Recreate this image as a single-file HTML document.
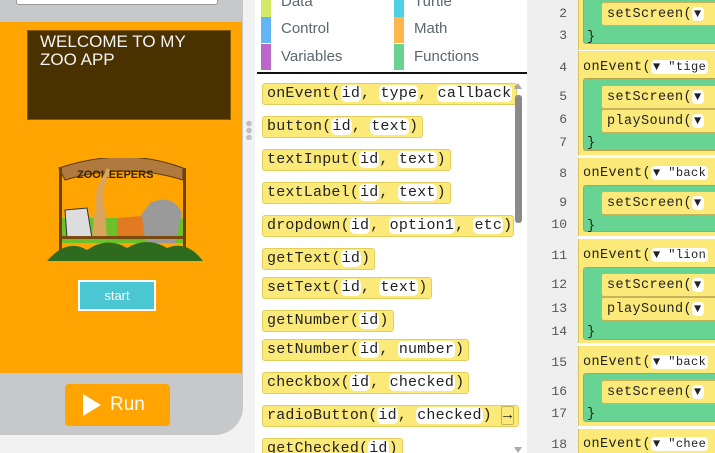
<!DOCTYPE html><html><head><style>
*{margin:0;padding:0;box-sizing:border-box}
html,body{width:715px;height:453px;overflow:hidden}
body{background:#f2f2f2;position:relative;font-family:"Liberation Sans",sans-serif}
.a{position:absolute}
.tb{position:absolute;left:262px;height:22px;background:#fbe97a;border:1px solid #e3cf5c;border-radius:3px;font-family:"Liberation Mono","Courier New",monospace;font-size:15px;letter-spacing:0.2px;line-height:20px;padding:0 4px;color:#222;white-space:nowrap}
.tb i{font-style:normal;background:#fff;border-radius:5px;padding:0 1px}
.cat{position:absolute;font-size:15px;color:#5b6770}
.bar{position:absolute;width:10px;height:26px}
.ln{position:absolute;left:527px;width:40px;text-align:right;font-family:"Liberation Mono",monospace;font-size:13px;color:#555}
.y{position:absolute;left:578px;right:0;background:#fbe97a;border-left:1px solid #d9c45a}
.g{position:absolute;left:583px;right:0;background:#67d494;border:1px solid #b7a24a;border-right:none;border-radius:3px 0 0 3px}
.s{position:absolute;left:601px;right:0;height:24px;background:#fbe97a;border:1px solid #c8b458;border-right:none;border-radius:3px 0 0 3px;font-family:"Liberation Mono",monospace;font-size:13.5px;letter-spacing:0.4px;line-height:22px;padding-left:5px;color:#222;white-space:nowrap}
.h{position:absolute;left:583px;font-family:"Liberation Mono",monospace;font-size:13.5px;letter-spacing:0.4px;color:#222;white-space:nowrap}
.h b,.s b{font-weight:normal;background:#fff;border-radius:4px;padding:0 2px;font-size:12px}
</style></head><body>
<div class="a" style="left:0;top:0;width:243px;height:435px;background:#c6c8ca;border-radius:0 0 28px 0"></div>
<div class="a" style="left:16px;top:-4px;width:202px;height:9px;background:#fff;border:1px solid #999;border-radius:3px"></div>
<div class="a" style="left:0;top:22px;width:242px;height:351px;background:#ffa400"></div>
<div class="a" style="left:27px;top:30px;width:204px;height:90px;background:#4a3100;border:1px solid #8a5a00;color:#f3f3f3;font-size:17px;line-height:18px;padding:2px 12px">WELCOME TO MY ZOO APP</div>
<svg class="a" style="left:47px;top:158px" width="156" height="110" viewBox="0 0 156 110">
<path d="M12 10 Q78 -12 136 10 L136 22 Q78 4 18 22Z" fill="#b07a3e" stroke="#5a3a10"/>
<text x="30" y="20" font-family="Liberation Sans" font-weight="bold" font-size="11" fill="#3a2205">ZOOKEEPERS</text>
<rect x="12" y="10" width="3" height="90" fill="#6b4210"/><rect x="136" y="10" width="3" height="90" fill="#6b4210"/>
<rect x="15" y="60" width="121" height="25" fill="#6cc12a"/>
<path d="M45 80 L50 30 L60 10 L63 12 L56 32 L60 80Z" fill="#d9a45c"/>
<path d="M18 52 L40 50 L45 80 L20 80Z" fill="#ddd" stroke="#333"/>
<path d="M103 45 Q125 35 135 55 L128 85 L100 85 L92 60Z" fill="#9a9a9a"/>
<path d="M70 60 L95 58 L98 82 L70 82Z" fill="#e07b22"/>
<rect x="15" y="78" width="121" height="3" fill="#7a4a10"/>
<path d="M0 103 Q20 80 40 92 Q60 78 80 90 Q100 78 120 90 Q140 82 156 103 Z" fill="#2e6b1e"/>
</svg>
<div class="a" style="left:78px;top:280px;width:78px;height:31px;background:#4bc6d3;border:2px solid #fff;color:#fff;font-size:13px;text-align:center;line-height:27px">start</div>
<div class="a" style="left:65px;top:384px;width:105px;height:42px;background:#ffa400;border-radius:4px;color:#fff;font-size:19px;line-height:42px;padding-left:45px">Run</div>
<svg class="a" style="left:82px;top:393px" width="20" height="24"><path d="M1 1 L19 12 L1 23Z" fill="#fff"/></svg>
<div class="a" style="left:246px;top:120px;width:6px;height:20px;background:radial-gradient(circle,#c0c0c0 2.5px,transparent 3px) 0 0/6px 7px"></div>
<div class="a" style="left:255px;top:0;width:272px;height:453px;background:#fff"></div>
<div class="bar" style="left:261px;top:-8px;background:#d3e965"></div><div class="cat" style="left:281px;top:-7px">Data</div>
<div class="bar" style="left:394px;top:-8px;background:#4dd0e1"></div><div class="cat" style="left:414px;top:-7px">Turtle</div>
<div class="bar" style="left:261px;top:17px;background:#64b5f6"></div><div class="cat" style="left:281px;top:20px">Control</div>
<div class="bar" style="left:394px;top:17px;background:#ffb74d"></div><div class="cat" style="left:414px;top:20px">Math</div>
<div class="bar" style="left:261px;top:44px;background:#ba68c8"></div><div class="cat" style="left:281px;top:48px">Variables</div>
<div class="bar" style="left:394px;top:44px;background:#68d391"></div><div class="cat" style="left:414px;top:48px">Functions</div>
<div class="a" style="left:257px;top:72px;width:270px;height:2px;background:#111"></div>
<div class="tb" style="top:83px;width:255px;overflow:hidden">onEvent(<i>id</i>, <i>type</i>, <i>callback</i>)</div>
<div class="tb" style="top:116px">button(<i>id</i>, <i>text</i>)</div>
<div class="tb" style="top:149px">textInput(<i>id</i>, <i>text</i>)</div>
<div class="tb" style="top:182px">textLabel(<i>id</i>, <i>text</i>)</div>
<div class="tb" style="top:215px;width:252px;overflow:hidden">dropdown(<i>id</i>, <i>option1</i>, <i>etc</i>)</div>
<div class="tb" style="top:248px">getText(<i>id</i>)</div>
<div class="tb" style="top:277px">setText(<i>id</i>, <i>text</i>)</div>
<div class="tb" style="top:310px">getNumber(<i>id</i>)</div>
<div class="tb" style="top:339px">setNumber(<i>id</i>, <i>number</i>)</div>
<div class="tb" style="top:372px">checkbox(<i>id</i>, <i>checked</i>)</div>
<div class="tb" style="top:405px">radioButton(<i>id</i>, <i>checked</i>) <i style="background:#fbe97a;border:1px solid #c8b458;border-radius:2px">→</i></div>
<div class="tb" style="top:438px">getChecked(<i>id</i>)</div>
<div class="a" style="left:515px;top:95px;width:7px;height:128px;background:#8a8a8a;border-radius:3px"></div>
<svg class="a" style="left:513px;top:82px" width="10" height="8"><path d="M1 7 L5 1 L9 7Z" fill="#aaa"/></svg>
<svg class="a" style="left:513px;top:446px" width="10" height="8"><path d="M1 1 L5 7 L9 1Z" fill="#aaa"/></svg>
<div class="a" style="left:527px;top:0;width:51px;height:453px;background:#efefef"></div>
<div class="a" style="left:578px;top:0;width:137px;height:453px;background:#fff"></div>
<div class="ln" style="top:6px">2</div><div class="ln" style="top:28px">3</div><div class="ln" style="top:60px">4</div>
<div class="ln" style="top:89px">5</div><div class="ln" style="top:112px">6</div><div class="ln" style="top:135px">7</div>
<div class="ln" style="top:166px">8</div><div class="ln" style="top:195px">9</div><div class="ln" style="top:217px">10</div>
<div class="ln" style="top:248px">11</div><div class="ln" style="top:277px">12</div><div class="ln" style="top:301px">13</div>
<div class="ln" style="top:324px">14</div><div class="ln" style="top:355px">15</div><div class="ln" style="top:384px">16</div>
<div class="ln" style="top:406px">17</div><div class="ln" style="top:437px">18</div>
<div class="y" style="top:0;height:50px"></div>
<div class="g" style="top:-3px;height:47px"></div>
<div class="s" style="top:2px">setScreen(<b>▼</b></div>
<div class="h" style="top:30px;left:587px">}</div>
<div class="y" style="top:51px;height:104px"></div>
<div class="h" style="top:60px">onEvent(<b>▼ "tige</b></div>
<div class="g" style="top:78px;height:73px"></div>
<div class="s" style="top:85px">setScreen(<b>▼</b></div>
<div class="s" style="top:109px">playSound(<b>▼</b></div>
<div class="h" style="top:136px;left:587px">}</div>
<div class="y" style="top:158px;height:78px"></div>
<div class="h" style="top:166px">onEvent(<b>▼ "back</b></div>
<div class="g" style="top:185px;height:47px"></div>
<div class="s" style="top:191px">setScreen(<b>▼</b></div>
<div class="h" style="top:219px;left:587px">}</div>
<div class="y" style="top:239px;height:104px"></div>
<div class="h" style="top:248px">onEvent(<b>▼ "lion</b></div>
<div class="g" style="top:267px;height:73px"></div>
<div class="s" style="top:273px">setScreen(<b>▼</b></div>
<div class="s" style="top:297px">playSound(<b>▼</b></div>
<div class="h" style="top:325px;left:587px">}</div>
<div class="y" style="top:346px;height:80px"></div>
<div class="h" style="top:355px">onEvent(<b>▼ "back</b></div>
<div class="g" style="top:373px;height:49px"></div>
<div class="s" style="top:380px">setScreen(<b>▼</b></div>
<div class="h" style="top:407px;left:587px">}</div>
<div class="y" style="top:429px;height:30px"></div>
<div class="h" style="top:437px">onEvent(<b>▼ "chee</b></div>
</body></html>
